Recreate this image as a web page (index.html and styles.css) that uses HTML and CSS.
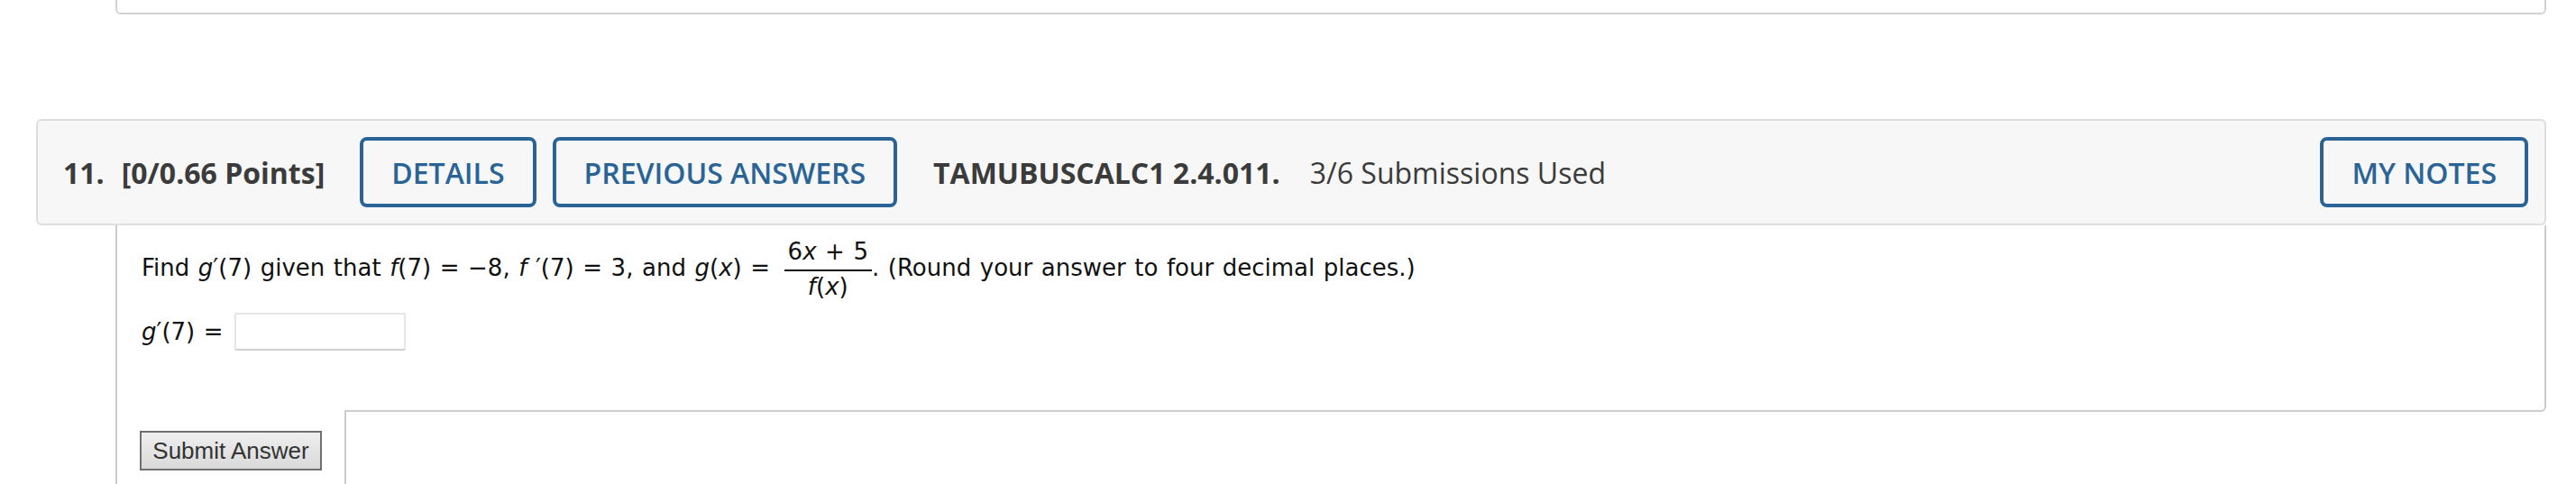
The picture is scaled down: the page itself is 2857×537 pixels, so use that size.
FILE: index.html
```html
<!DOCTYPE html>
<html lang="en">
<head>
    <meta charset="UTF-8">
    <title>Question 11</title>
    <link rel="stylesheet" href="styles.css">
</head>
<body>
    <div class="prev-card"></div>

    <div class="q-header">
        <span class="q-number">11.</span>
        <span class="q-points">[0/0.66 Points]</span>
        <button class="q-btn">DETAILS</button>
        <button class="q-btn">PREVIOUS ANSWERS</button>
        <span class="q-ref">TAMUBUSCALC1 2.4.011.</span>
        <span class="q-subs">3/6 Submissions Used</span>
        <button class="q-btn notes">MY NOTES</button>
    </div>

    <div class="q-body">
        <p class="q-text">
            Find <i>g</i>′(7) given that <i>f</i>(7) = −8, <i>f</i> ′(7) = 3, and <i>g</i>(<i>x</i>) =
            <span class="frac"><span class="num">6<i>x</i> + 5</span><span class="den"><i>f</i>(<i>x</i>)</span></span>. (Round your answer to four decimal places.)
        </p>
        <div class="answer-row">
            <i>g</i>′(7) = <input type="text" class="answer-input">
        </div>
    </div>

    <div class="q-submit">
        <button class="submit-btn">Submit Answer</button>
    </div>
</body>
</html>
```

FILE: styles.css
```css
* {
    margin: 0;
    padding: 0;
    box-sizing: border-box;
}

body {
    background: #ffffff;
    font-family: "Open Sans", sans-serif;
    color: #3b3b3b;
}

.prev-card {
    height: 16px;
    margin: 0 33px 0 128px;
    border: 2px solid #d2d2d2;
    border-top: none;
    border-radius: 0 0 6px 6px;
}

.q-header {
    display: flex;
    align-items: center;
    height: 118px;
    margin: 116px 33px 0 40px;
    padding: 0 18px 0 28px;
    background: #f7f7f7;
    border: 2px solid #dedede;
    border-radius: 6px;
    font-size: 32px;
}

.q-number {
    font-weight: 700;
    margin-right: 19px;
}

.q-points {
    font-weight: 700;
    margin-right: 39px;
}

.q-btn {
    height: 78px;
    padding: 0 31px;
    margin-right: 18px;
    background: transparent;
    border: 4px solid #2a6496;
    border-radius: 8px;
    color: #2a6496;
    font-family: "Open Sans", sans-serif;
    font-size: 32px;
    font-weight: 600;
}

.q-ref {
    font-weight: 700;
    margin-left: 22px;
    margin-right: 33px;
}

.q-btn.notes {
    margin-left: auto;
    margin-right: 0;
}

.q-body {
    height: 207px;
    margin: 0 33px 0 128px;
    padding: 12px 27px 0 27px;
    border: 2px solid #cccccc;
    border-top: none;
    border-radius: 0 0 6px 0;
    font-family: "DejaVu Sans", Verdana, sans-serif;
    font-size: 26px;
    word-spacing: 1.3px;
    color: #111111;
}

.q-text {
    line-height: 40px;
}

.frac {
    display: inline-flex;
    flex-direction: column;
    align-items: center;
    vertical-align: middle;
    margin: 0 0 0 6px;
}

.frac .num {
    line-height: 34px;
    padding: 0 4px 3px;
    border-bottom: 2px solid #111111;
}

.frac .den {
    line-height: 34px;
}

.answer-row {
    display: flex;
    align-items: center;
    margin-top: 12px;
}

.answer-input {
    width: 190px;
    height: 42px;
    margin-left: 12px;
    border: 2px solid #e6e6e6;
    border-bottom-color: #d0d0d0;
    border-radius: 2px;
}

.q-submit {
    width: 256px;
    height: 100px;
    margin: -2px 0 0 128px;
    padding: 23px 0 0 25px;
    background: #ffffff;
    border: 2px solid #cccccc;
    border-top: none;
    border-radius: 0 0 6px 6px;
}

.submit-btn {
    width: 202px;
    height: 44px;
    background: linear-gradient(#efefef, #d9d9d9);
    border: 2px solid #707070;
    font-family: "Liberation Sans", Arial, sans-serif;
    font-size: 26px;
    color: #333333;
}
```
